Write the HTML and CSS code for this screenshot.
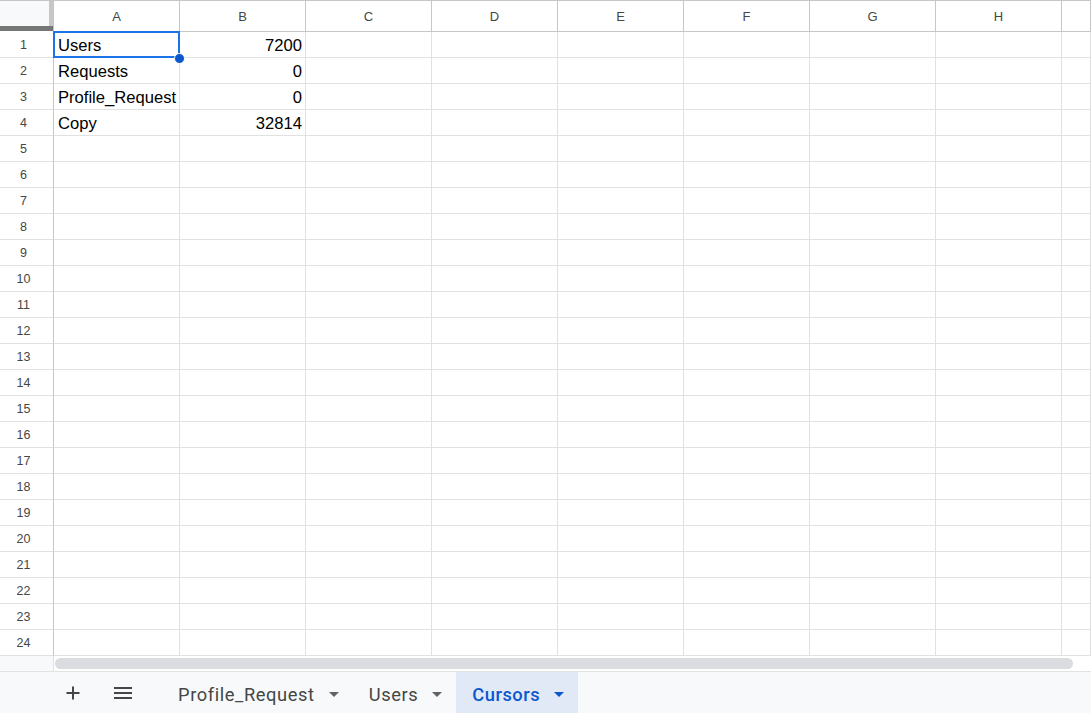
FILE: index.html
```html
<!DOCTYPE html>
<html lang="en">
<head>
    <meta charset="UTF-8">
    <title>Sheet</title>
    <link rel="stylesheet" href="styles.css">
</head>
<body>
    <div class="sheet">
        <div class="grid" id="grid"></div>

        <div class="hscroll">
            <div class="hscroll-corner"></div>
            <div class="hscroll-track"><div class="hscroll-thumb"></div></div>
        </div>

        <div class="tabbar">
            <button class="tb-btn" title="Add sheet">
                <svg width="16" height="16" viewBox="0 0 16 16"><path d="M8 1.5v13M1.5 8h13" stroke="#444746" stroke-width="2"/></svg>
            </button>
            <button class="tb-btn" title="All sheets">
                <svg width="20" height="16" viewBox="0 0 20 16"><path d="M1 3h18M1 8h18M1 13h18" stroke="#444746" stroke-width="2"/></svg>
            </button>
            <div class="tabs">
                <div class="tab">Profile_Request <span class="caret"></span></div>
                <div class="tab">Users <span class="caret"></span></div>
                <div class="tab active">Cursors <span class="caret"></span></div>
            </div>
        </div>
    </div>

    <script>
        // данные листа
        const data = [
            ['Users', 7200],
            ['Requests', 0],
            ['Profile_Request', 0],
            ['Copy', 32814]
        ];
        const cols = ['A', 'B', 'C', 'D', 'E', 'F', 'G', 'H', ''];
        const rowCount = 24;

        let html = '<div class="corner"></div>';
        html += cols.map(c => `<div class="col-head">${c}</div>`).join('');

        for (let r = 1; r <= rowCount; r++) {
            const row = data[r - 1] || [];
            html += `<div class="row-head">${r}</div>`;
            cols.forEach((c, i) => {
                let cls = 'cell';
                let text = '';
                if (i === 0 && row[0] !== undefined) text = row[0];
                if (i === 1 && row[1] !== undefined) { text = row[1]; cls += ' num'; }
                if (r === 1 && i === 0) cls += ' selected';
                html += `<div class="${cls}">${text}</div>`;
            });
        }
        document.getElementById('grid').innerHTML = html;
    </script>
</body>
</html>
```

FILE: styles.css
```css
*, *::before, *::after {
    box-sizing: border-box;
}
body {
    margin: 0;
    width: 1091px;
    height: 713px;
    overflow: hidden;
    background: #fff;
    font-family: Arial, "Liberation Sans", sans-serif;
}
.sheet {
    display: flex;
    flex-direction: column;
    height: 713px;
}
.grid {
    display: grid;
    grid-template-columns: 54px repeat(8, 126px) 1fr;
    grid-template-rows: 31px repeat(24, 26px);
    border-top: 1px solid #c4c7c5;
}
.grid > div {
    border-right: 1px solid #e1e1e1;
    border-bottom: 1px solid #e1e1e1;
}
.corner {
    background:
        linear-gradient(#747775, #747775) left bottom / 100% 5px no-repeat,
        linear-gradient(#c7c7c7, #c7c7c7) right top / 4px 100% no-repeat,
        #f8f9fa;
    border-right: 1px solid #c4c7c5 !important;
    border-bottom: 1px solid #fff !important;
}
.grid > .col-head {
    border-right-color: #c4c7c5;
    border-bottom-color: #c4c7c5;
    font-size: 13px;
    color: #444746;
    text-align: center;
    line-height: 30px;
    padding-top: 1px;
}
.grid > .row-head {
    border-right-color: #c4c7c5;
    border-bottom-color: #e1e1e1;
    font-size: 12.5px;
    color: #444746;
    text-align: center;
    line-height: 24px;
    padding: 1px 6px 0 0;
}
.cell {
    font-size: 16.6px;
    color: #000;
    line-height: 23px;
    padding: 2px 3px 0 4px;
    white-space: nowrap;
    overflow: visible;
}
.cell.num {
    text-align: right;
}
.cell.selected {
    position: relative;
}
.cell.selected::before {
    content: "";
    position: absolute;
    left: -1px;
    top: -1px;
    width: 127px;
    height: 27px;
    border: 2px solid #1a73e8;
}
.cell.selected::after {
    content: "";
    position: absolute;
    left: 120px;
    top: 21px;
    width: 11px;
    height: 11px;
    border-radius: 50%;
    background: #0b57d0;
    border: 1px solid #fff;
}

.hscroll {
    display: flex;
    height: 16px;
    border-bottom: 1px solid #e1e3e1;
}
.hscroll-corner {
    width: 54px;
    background: #f8f9fa;
    border-right: 1px solid #e1e1e1;
}
.hscroll-track {
    flex: 1;
    padding: 2px 18px 2px 1px;
}
.hscroll-thumb {
    height: 11px;
    border-radius: 6px;
    background: #dadce0;
}

.tabbar {
    flex: 1;
    display: flex;
    align-items: stretch;
    background: #f8f9fa;
    padding-left: 56px;
}
.tb-btn {
    width: 34px;
    margin-right: 16px;
    border: none;
    background: none;
    padding: 0;
    display: flex;
    align-items: center;
    justify-content: center;
}
.tabs {
    display: flex;
    margin-left: 6px;
}
.tab {
    display: flex;
    align-items: center;
    gap: 14px;
    padding: 4px 14px 0 16px;
    font-family: Roboto, "Noto Sans", sans-serif;
    font-size: 18.3px;
    font-weight: 400;
    letter-spacing: 0.6px;
    color: #444746;
}
.tab.active {
    background: #e1e9f7;
    color: #0b57d0;
    font-weight: 500;
    letter-spacing: 0.5px;
}
.caret {
    width: 0;
    height: 0;
    border-left: 5px solid transparent;
    border-right: 5px solid transparent;
    border-top: 5px solid #5f6368;
}
.tab.active .caret {
    border-top-color: #0b57d0;
}
```
